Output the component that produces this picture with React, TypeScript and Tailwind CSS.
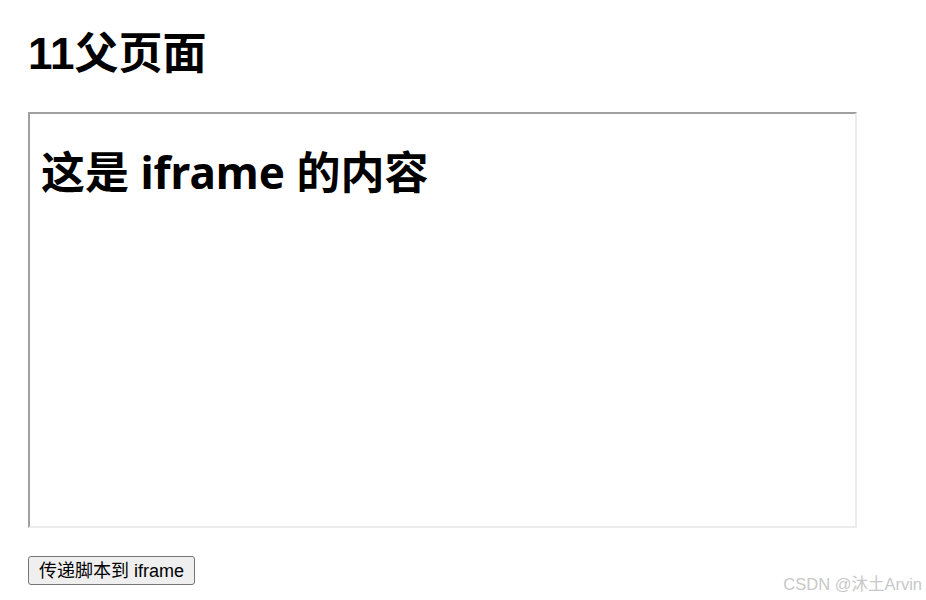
import React from "react";

const App: React.FC = () => {
  return (
    <div className="relative min-h-[600px] bg-white px-[28px] pt-[28px] text-black font-['Liberation_Sans','Noto_Sans_CJK_SC',sans-serif]">
      {/* 父页面标题 */}
      <h1 className="text-[44px] font-bold leading-[52px]">11父页面</h1>

      {/* iframe 区域 */}
      <div className="mt-[32px] h-[416px] w-[829px] border-2 border-t-[#a0a0a0] border-l-[#a0a0a0] border-r-[#ececec] border-b-[#ececec] bg-white">
        <h1 className="ml-[11px] mt-[30px] text-[44px] font-bold leading-[56px] font-['Noto_Sans','Noto_Sans_CJK_SC',sans-serif]">
          这是 iframe 的内容
        </h1>
      </div>

      <div className="mt-[28px] flex">
        <button
          type="button"
          className="h-[29px] rounded-[3px] border border-[#767676] bg-[#efefef] px-[10px] text-[18px] leading-[24px]"
        >
          传递脚本到 iframe
        </button>
      </div>

      {/* 水印 */}
      <div className="absolute right-[4px] top-[573px] text-[16.5px] leading-[22px] text-[#c8c8c8]">
        CSDN @沐土Arvin
      </div>
    </div>
  );
};

export default App;
